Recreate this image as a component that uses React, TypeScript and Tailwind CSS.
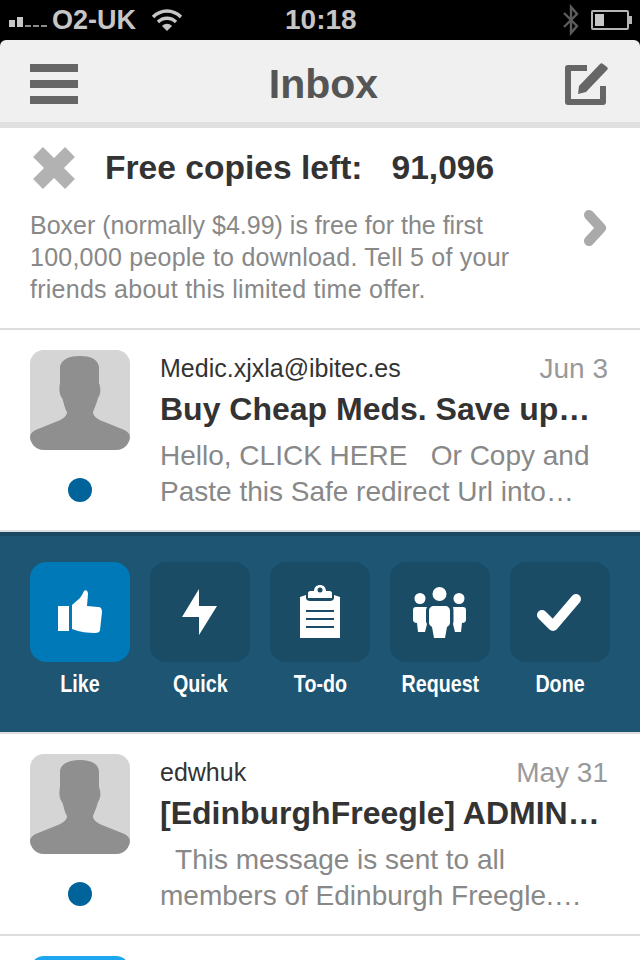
import React from "react";

const Avatar: React.FC = () => (
  <div className="w-[100px] h-[100px] rounded-[14px] overflow-hidden bg-[#d5d5d5]">
    <svg viewBox="0 0 100 100" className="w-full h-full block">
      <path
        fill="#8f8f8f"
        d="M50 6C40 6 31 9 30 17L30 33C29 38 29 44 32 48C34 52 34 57 37 62C37 66 33 69 28 71L8 79C3 81 0 83 0 88V100H100V88C100 83 97 81 92 79L72 71C67 69 63 66 63 62C65 57 67 52 68 48C71 44 71 38 69 33L69 17C68 9 60 6 50 6Z"
      />
    </svg>
  </div>
);

const ThumbIcon = () => (
  <svg viewBox="0 0 100 100" className="w-full h-full">
    <rect x="28" y="44" width="11" height="25" fill="#fff" />
    <path
      fill="#fff"
      d="M42 43L50 36C52 33 53 31 54 29C56 27 58 29 58 32L57 44L68 45C71 45 72 47 72 50L70 68C70 70 68 71 65 71C58 71 50 70 42 67Z"
    />
  </svg>
);

const BoltIcon = () => (
  <svg viewBox="0 0 100 100" className="w-full h-full">
    <polygon fill="#fff" points="49,27 32,55 49,55 49,73 67,44 49,44" />
  </svg>
);

const ClipboardIcon = () => (
  <svg viewBox="0 0 100 100" className="w-full h-full">
    <path fill="#fff" d="M30 35L36 33V36C36 38 38 39 40 39H60C62 39 64 38 64 36V33L70 35V76H30Z" />
    <path fill="#fff" d="M38 36V31C38 30 39 29 40 29H44C44 25 47 23 50 23C53 23 56 25 56 29H60C61 29 62 30 62 31V36Z" />
    <circle cx="50" cy="28" r="2.5" fill="#1a4c66" />
    <rect x="36" y="48" width="28" height="2" fill="#1a4c66" />
    <rect x="36" y="56" width="28" height="2" fill="#1a4c66" />
    <rect x="36" y="64" width="28" height="2" fill="#1a4c66" />
  </svg>
);

const PeopleIcon = () => (
  <svg viewBox="0 0 100 100" className="w-full h-full">
    <g fill="#fff">
      <circle cx="49.5" cy="32" r="7" />
      <circle cx="30" cy="36.5" r="5.5" />
      <circle cx="69" cy="36.5" r="5.5" />
      <path d="M44 44H55C58 44 60 46 60 49V61C60 63 58 64 57 65L55 76H44L42 65C41 64 39 63 39 61V49C39 46 41 44 44 44Z" />
      <path d="M26 45H37C36 47 36 48 36 50V60L37 62L35 70H28L27 61C25 61 23 60 23 58V48C23 46 24 45 26 45Z" />
      <path d="M63 45H73C75 45 76 46 76 48V58C76 60 74 61 72 61L71 70H65L63 62L63.5 60V50C63.5 48 63.5 47 63 45Z" />
    </g>
  </svg>
);

const CheckIcon = () => (
  <svg viewBox="0 0 100 100" className="w-full h-full">
    <path d="M32 53L43 64L66 37" fill="none" stroke="#fff" strokeWidth="10" strokeLinecap="round" strokeLinejoin="round" />
  </svg>
);

const actions = [
  { label: "Like", icon: <ThumbIcon />, active: true },
  { label: "Quick", icon: <BoltIcon /> },
  { label: "To-do", icon: <ClipboardIcon /> },
  { label: "Request", icon: <PeopleIcon /> },
  { label: "Done", icon: <CheckIcon /> },
];

const EmailRow: React.FC<{ from: string; date: string; subject: string; lines: string[] }> = ({ from, date, subject, lines }) => (
  <div className="flex h-[200px] pt-5 pl-[30px] pr-8 bg-white">
    <div className="w-[100px] shrink-0 flex flex-col items-center">
      <Avatar />
      <div className="mt-7 w-6 h-6 rounded-full bg-[#00649b]" />
    </div>
    <div className="ml-[30px] flex-1 min-w-0">
      <div className="flex items-center justify-between h-9 mt-[1px]">
        <span className="text-[25px] text-[#333]">{from}</span>
        <span className="text-[28px] text-[#999]">{date}</span>
      </div>
      <div className="text-[32px] font-bold text-[#333] leading-[44px] whitespace-nowrap">{subject}</div>
      <div className="mt-[7px]">
        {lines.map((line) => (
          <div key={line} className="text-[28px] leading-[36px] text-[#888] whitespace-pre">
            {line}
          </div>
        ))}
      </div>
    </div>
  </div>
);

export default function App() {
  return (
    <div className="w-[640px] h-[960px] overflow-hidden bg-black font-['Liberation_Sans',Arial,sans-serif]">
      {/* status bar */}
      <div className="h-10 flex items-center px-2 relative text-[#c6c6c6]">
        <div className="flex items-end gap-[2px] h-[10px] ml-[1px] mt-[3px]">
          <div className="w-[6px] h-[7px] bg-[#c6c6c6]" />
          <div className="w-[6px] h-[10px] bg-[#c6c6c6]" />
          <div className="w-[6px] h-[2px] bg-[#8a8a8a]" />
          <div className="w-[6px] h-[2px] bg-[#8a8a8a]" />
          <div className="w-[6px] h-[2px] bg-[#8a8a8a]" />
        </div>
        <span className="ml-[5px] text-[27px] font-bold leading-none">O2-UK</span>
        <svg viewBox="0 0 32 24" className="w-8 h-6 ml-[15px]">
          <path d="M2 9C10 1 22 1 30 9" fill="none" stroke="#c6c6c6" strokeWidth="3.4" />
          <path d="M7 14C12 9 20 9 25 14" fill="none" stroke="#c6c6c6" strokeWidth="3.4" />
          <path d="M11 18C14 15 18 15 21 18L16 23Z" fill="#c6c6c6" />
        </svg>
        <span className="absolute left-[285px] top-[5px] text-[28px] font-bold leading-[30px]">10:18</span>
        <svg viewBox="0 0 20 32" className="w-5 h-8 ml-auto mr-[10px]">
          <path d="M3 9L16 22L10 29V3L16 10L3 23" fill="none" stroke="#5c5c5c" strokeWidth="2.4" />
        </svg>
        <div className="flex items-center">
          <div className="w-[38px] h-5 border-2 border-[#b5b5b5] rounded-[2px] p-[2px]">
            <div className="w-[9px] h-full bg-[#c6c6c6]" />
          </div>
          <div className="w-[3px] h-2 bg-[#b5b5b5]" />
        </div>
      </div>

      {/* nav bar */}
      <div className="h-[88px] bg-[#f0f0f0] border-b-[6px] border-[#e0e0e0] rounded-t-[6px] flex items-center justify-between pl-[30px] pr-[31px]">
        <div className="flex flex-col gap-2 mt-[6px]">
          <div className="w-12 h-2 bg-[#666]" />
          <div className="w-12 h-2 bg-[#666]" />
          <div className="w-12 h-2 bg-[#666]" />
        </div>
        <span className="text-[41px] font-bold text-[#555] ml-[6px] mt-[8px]">Inbox</span>
        <svg viewBox="0 0 46 46" className="w-[46px] h-[46px] mt-[6px]">
          <path d="M24 7H5V41H40V25" fill="none" stroke="#666" strokeWidth="6" strokeLinejoin="round" />
          <path d="M15 33L16 25L37 3C38 2 39 2 40 3L44 6C45 7 45 8 44 9L23 31Z" fill="#666" />
        </svg>
      </div>

      {/* promo banner */}
      <div className="h-[202px] bg-white border-b-2 border-[#ddd] pt-[18px] pl-[30px] pr-[30px]">
        <div className="flex items-center h-11">
          <svg viewBox="0 0 48 48" className="w-12 h-12 shrink-0">
            <path d="M8 8L40 40M40 8L8 40" stroke="#b2b2b2" strokeWidth="14" />
          </svg>
          <span className="ml-[27px] text-[33.6px] font-bold text-[#333] whitespace-pre">Free copies left:</span>
          <span className="ml-[29px] text-[33.6px] font-bold text-[#333]">91,096</span>
        </div>
        <div className="flex items-start justify-between mt-[19px]">
          <p className="text-[25px] leading-[32px] text-[#888]">
            Boxer (normally $4.99) is free for the first
            <br />
            <span className="tracking-[0.24px]">100,000 people to download. Tell 5 of your</span>
            <br />
            <span className="tracking-[0.26px]">friends about this limited time offer.</span>
          </p>
          <svg viewBox="0 0 26 38" className="w-[26px] h-[38px] mr-[1px]">
            <path d="M6 6L18 19L6 32" fill="none" stroke="#aaa" strokeWidth="10" strokeLinecap="round" strokeLinejoin="round" />
          </svg>
        </div>
      </div>

      <EmailRow
        from="Medic.xjxla@ibitec.es"
        date="Jun 3"
        subject="Buy Cheap Meds. Save up…"
        lines={["Hello, CLICK HERE   Or Copy and", "Paste this Safe redirect Url into…"]}
      />

      {/* action tray */}
      <div className="h-[204px] border-y-2 border-[#ddd] bg-[#1d5573]">
        <div className="h-full border-t-4 border-[#1a4a63] pt-[26px] px-[30px] flex gap-5">
          {actions.map((action) => (
            <div key={action.label} className="w-[100px] flex flex-col items-center">
              <div className={`w-[100px] h-[100px] rounded-[16px] ${action.active ? "bg-[#0079b8]" : "bg-[#1a4c66]"}`}>
                {action.icon}
              </div>
              <span className="mt-[7px] text-[24px] leading-[30px] font-bold text-white whitespace-nowrap scale-x-[0.82]">
                {action.label}
              </span>
            </div>
          ))}
        </div>
      </div>

      <EmailRow
        from="edwhuk"
        date="May 31"
        subject="[EdinburghFreegle] ADMIN…"
        lines={["  This message is sent to all", "members of Edinburgh Freegle.…"]}
      />

      {/* next row, cut off by the screen */}
      <div className="border-t-2 border-[#ddd] bg-white h-[30px] pt-5 pl-[30px]">
        <div className="w-[100px] h-[100px] rounded-[14px] bg-[#1ea7ee]" />
      </div>
    </div>
  );
}
